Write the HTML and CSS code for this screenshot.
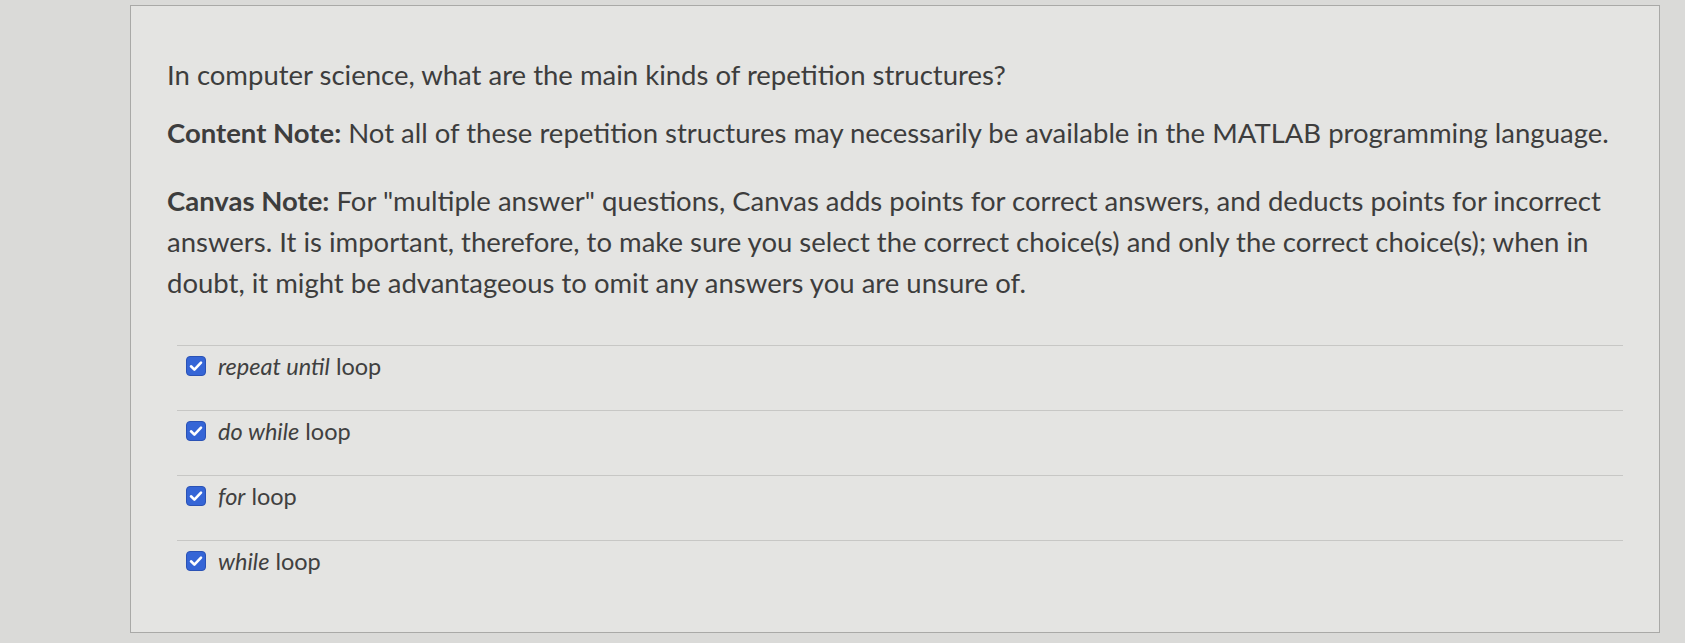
FILE: index.html
```html
<!DOCTYPE html>
<html>
<head>
<meta charset="utf-8">
<link rel="stylesheet" href="styles.css">
</head>
<body>
<div class="card">
  <div class="question">
    <p class="q-line first">In computer science, what are the main kinds of repetition structures?</p>
    <p class="q-line note"><strong>Content Note:</strong> Not all of these repetition structures may necessarily be available in the MATLAB programming language.</p>
    <p class="q-line canvas"><strong>Canvas Note:</strong> For "multiple answer" questions, Canvas adds points for correct answers, and deducts points for incorrect answers. It is important, therefore, to make sure you select the correct choice(s) and only the correct choice(s); when in doubt, it might be advantageous to omit any answers you are unsure of.</p>
  </div>
  <ul class="answers">
    <li class="answer">
      <span class="box"><svg viewBox="0 0 20 20" width="20" height="20"><rect x="0.5" y="0.5" width="19" height="19" rx="3.5" fill="#3565d6" stroke="#2a52b5"/><path d="M5 10.3 L8.4 13.6 L15 6.6" fill="none" stroke="#fff" stroke-width="2.6" stroke-linecap="round" stroke-linejoin="round"/></svg></span>
      <span class="label"><em>repeat until</em> loop</span>
    </li>
    <li class="answer">
      <span class="box"><svg viewBox="0 0 20 20" width="20" height="20"><rect x="0.5" y="0.5" width="19" height="19" rx="3.5" fill="#3565d6" stroke="#2a52b5"/><path d="M5 10.3 L8.4 13.6 L15 6.6" fill="none" stroke="#fff" stroke-width="2.6" stroke-linecap="round" stroke-linejoin="round"/></svg></span>
      <span class="label"><em>do while</em> loop</span>
    </li>
    <li class="answer">
      <span class="box"><svg viewBox="0 0 20 20" width="20" height="20"><rect x="0.5" y="0.5" width="19" height="19" rx="3.5" fill="#3565d6" stroke="#2a52b5"/><path d="M5 10.3 L8.4 13.6 L15 6.6" fill="none" stroke="#fff" stroke-width="2.6" stroke-linecap="round" stroke-linejoin="round"/></svg></span>
      <span class="label"><em>for</em> loop</span>
    </li>
    <li class="answer">
      <span class="box"><svg viewBox="0 0 20 20" width="20" height="20"><rect x="0.5" y="0.5" width="19" height="19" rx="3.5" fill="#3565d6" stroke="#2a52b5"/><path d="M5 10.3 L8.4 13.6 L15 6.6" fill="none" stroke="#fff" stroke-width="2.6" stroke-linecap="round" stroke-linejoin="round"/></svg></span>
      <span class="label"><em>while</em> loop</span>
    </li>
  </ul>
</div>
</body>
</html>
```
FILE: styles.css
```css
html, body {
  margin: 0;
  padding: 0;
}
body {
  background: #dadad8;
  font-family: Lato, "Open Sans", sans-serif;
  color: #3d3d3d;
  height: 643px;
  overflow: hidden;
}
.card {
  margin: 5px 25px 0 130px;
  height: 628px;
  box-sizing: border-box;
  border: 1px solid #a9a9a7;
  background: #e4e4e2;
  padding: 48px 0 0 36px;
}
.question {
  width: 1462px;
}
.q-line {
  margin: 0;
  font-size: 27.5px;
  line-height: 41px;
}
.q-line strong {
  font-weight: 700;
}
.note {
  margin-top: 17px;
}
.canvas {
  margin-top: 27px;
}
.answers {
  list-style: none;
  margin: 42px 0 0 10px;
  padding: 0;
  width: 1446px;
}
.answer {
  display: flex;
  align-items: center;
  gap: 12px;
  border-top: 1px solid #c7c7c5;
  padding: 7px 0 31px 9px;
  height: 26px;
}
.box {
  display: flex;
  width: 20px;
  height: 20px;
}
.label {
  font-size: 23.5px;
  line-height: 26px;
  color: #404040;
}
.label em {
  font-style: italic;
}
```
